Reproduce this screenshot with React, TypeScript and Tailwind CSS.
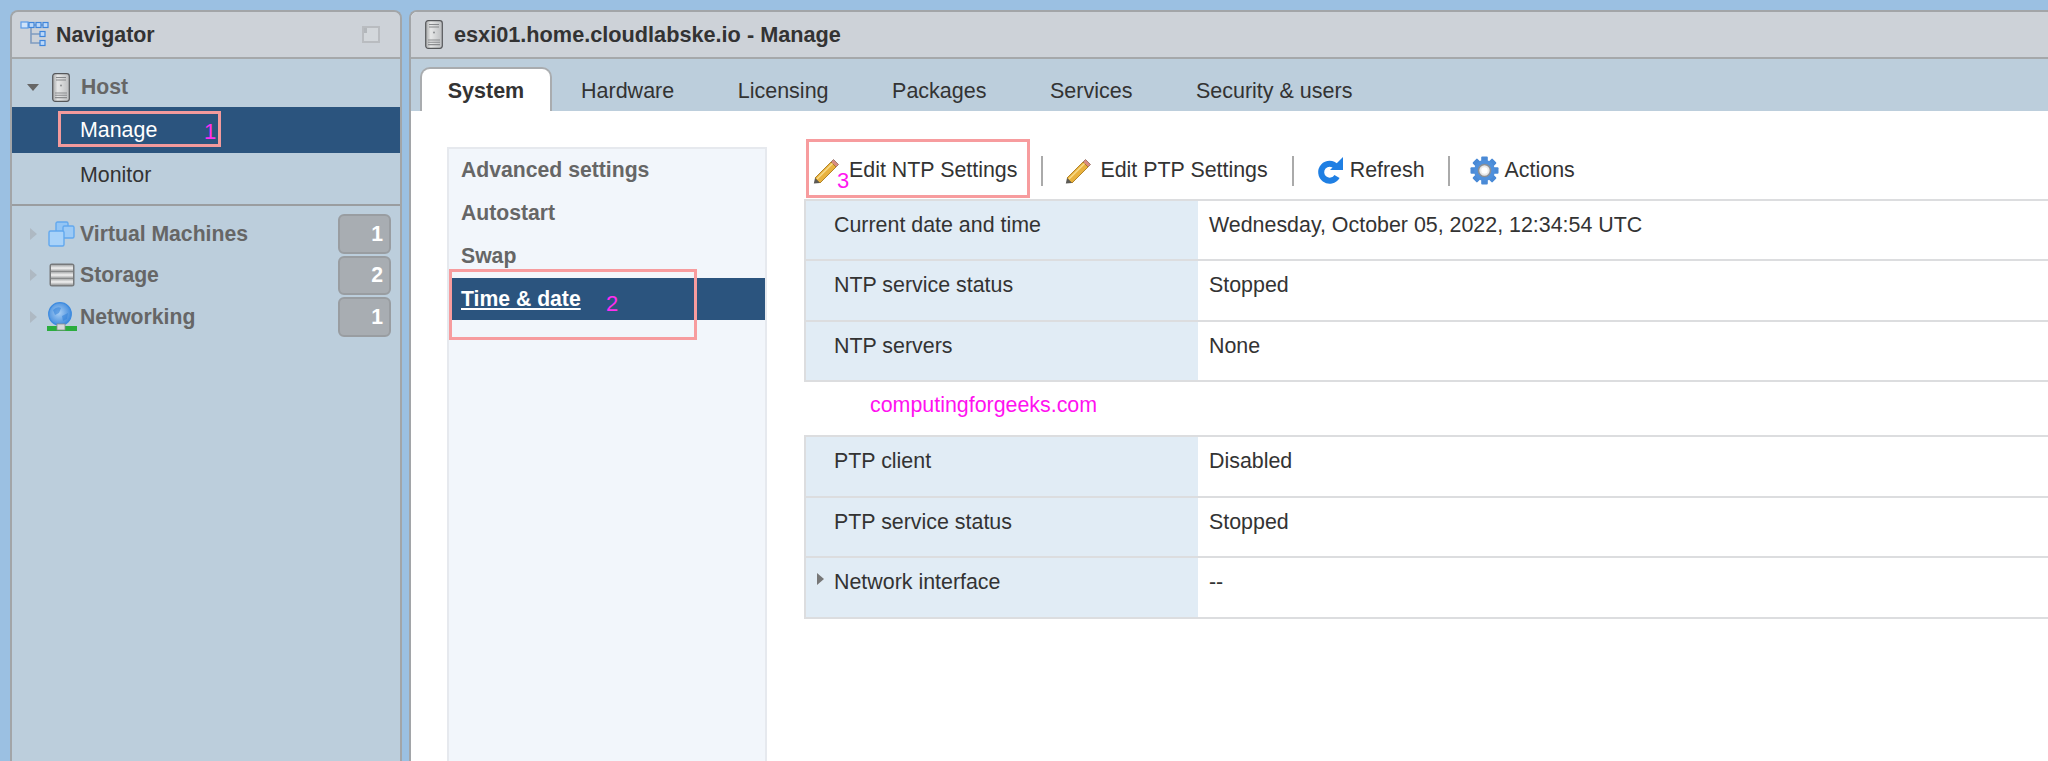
const font = "font-['Liberation_Sans',Arial,sans-serif]";

function NavTreeIcon() {
  return (
    <svg width="29" height="28" viewBox="0 0 29 28" className="shrink-0">
      <path d="M5 4 H27 M11 4 V22 H22 M11 13 H22" stroke="#7f9cc0" strokeWidth="1.6" fill="none" />
      <rect x="1" y="1" width="7" height="6" fill="#cfe3fa" stroke="#5b9be8" strokeWidth="1.2" />
      {[[9, 1.5], [16, 1.5], [23, 1.5], [20, 10.5], [20, 19.5]].map(([x, y]) => (
        <rect key={`${x}-${y}`} x={x} y={y} width="5" height="5" fill="#bcd8f8" stroke="#3f86dc" strokeWidth="1.2" />
      ))}
    </svg>
  );
}

function HostIcon() {
  return (
    <svg width="18" height="29" viewBox="0 0 18 29" className="shrink-0">
      <defs>
        <linearGradient id="hostBody" x1="0" x2="1" y1="0" y2="0">
          <stop offset="0" stopColor="#a5a7a8" />
          <stop offset="0.3" stopColor="#e6e7e7" />
          <stop offset="1" stopColor="#bcbec0" />
        </linearGradient>
      </defs>
      <rect x="0.7" y="0.7" width="16.6" height="27.6" rx="2.5" fill="url(#hostBody)" stroke="#55575a" strokeWidth="1.2" />
      <path d="M4 4.5 H14 M4 7 H14" stroke="#85878a" strokeWidth="1.1" />
      <circle cx="9" cy="12.5" r="0.9" fill="#85878a" />
      <path d="M3 20 H15 M3 22.3 H15 M3 24.6 H15" stroke="#8a8c8e" strokeWidth="1.1" />
    </svg>
  );
}

function VmIcon() {
  return (
    <svg width="27" height="26" viewBox="0 0 27 26" className="shrink-0">
      <rect x="8" y="1" width="12" height="10" rx="1.5" fill="#93c5f5" stroke="#62a8ee" strokeWidth="1.4" />
      <rect x="15" y="5" width="11" height="12" rx="1.5" fill="#9ccaf6" stroke="#62a8ee" strokeWidth="1.4" />
      <rect x="1" y="10" width="15" height="15" rx="1.5" fill="#a8d2f9" stroke="#62a8ee" strokeWidth="1.4" />
    </svg>
  );
}

function StorageIcon() {
  return (
    <svg width="26" height="24" viewBox="0 0 26 24" className="shrink-0">
      <defs>
        <linearGradient id="disk" x1="0" x2="0" y1="0" y2="1">
          <stop offset="0" stopColor="#a9abac" />
          <stop offset="0.5" stopColor="#f2f2f2" />
          <stop offset="1" stopColor="#9a9c9d" />
        </linearGradient>
      </defs>
      <rect x="0.5" y="0.5" width="25" height="23" rx="2.5" fill="#77797b" />
      <rect x="2" y="2" width="22" height="6.3" fill="url(#disk)" />
      <rect x="2" y="8.9" width="22" height="6.3" fill="url(#disk)" />
      <rect x="2" y="15.8" width="22" height="6.3" fill="url(#disk)" />
    </svg>
  );
}

function NetworkIcon() {
  return (
    <svg width="30" height="29" viewBox="0 0 30 29" className="shrink-0">
      <defs>
        <radialGradient id="globe" cx="0.45" cy="0.45" r="0.65">
          <stop offset="0" stopColor="#a9cff5" />
          <stop offset="1" stopColor="#2f7fd8" />
        </radialGradient>
      </defs>
      <circle cx="13" cy="12" r="11.3" fill="url(#globe)" stroke="#3d8be0" strokeWidth="1.2" />
      <path d="M6 8 Q10 4 14 6 L12 11 L8 13 Z M15 14 L21 11 L20 17 L16 19 Z" fill="#2f7fd8" opacity="0.55" />
      <rect x="0" y="24" width="30" height="5" fill="#2bad3e" />
      <rect x="10" y="22" width="8" height="6" fill="#d6d8d9" stroke="#8a8c8d" strokeWidth="0.8" />
    </svg>
  );
}

function PencilIcon() {
  return (
    <svg width="27" height="26" viewBox="0 0 27 26" className="shrink-0">
      <path d="M20.5 1.5 L25.5 6.5 L23 9 L18 4 Z" fill="#d98b80" stroke="#8f6b5c" strokeWidth="0.8" />
      <path d="M18 4 L23 9 L7 25 L2 20 Z" fill="#e9b23e" stroke="#a97a1f" strokeWidth="0.9" />
      <path d="M19.5 5.5 L4 21" stroke="#f8dc8b" strokeWidth="1.5" />
      <path d="M2 20 L7 25 L0.8 25.6 Z" fill="#5c5a55" />
    </svg>
  );
}

function RefreshIcon() {
  return (
    <svg width="27" height="29" viewBox="0 0 27 29" className="shrink-0">
      <path d="M19 10.5 A8.5 8.5 0 1 0 20 20.5" fill="none" stroke="#1f7fe3" strokeWidth="6" />
      <path d="M26 1 V14 H13 Z" fill="#1f7fe3" />
    </svg>
  );
}

function GearIcon() {
  const teeth = [0, 45, 90, 135, 180, 225, 270, 315];
  return (
    <svg width="29" height="29" viewBox="0 0 29 29" className="shrink-0">
      {teeth.map((a) => (
        <rect key={a} x="11.2" y="0.5" width="6.6" height="7" rx="1" fill="#4a8ad6" transform={`rotate(${a} 14.5 14.5)`} />
      ))}
      <circle cx="14.5" cy="14.5" r="10.5" fill="#4f90dc" />
      <circle cx="14.5" cy="14.5" r="6" fill="#e9e9e9" stroke="#8b8f94" strokeWidth="1.6" />
      <circle cx="14.5" cy="14.5" r="3.2" fill="#ffffff" />
    </svg>
  );
}

function CollapsedArrow({ color = 'border-l-[#aeb9c3]' }: { color?: string }) {
  return <span className={`block h-0 w-0 border-y-[6px] border-l-[7px] border-y-transparent ${color}`} />;
}

const inventory = [
  { label: 'Virtual Machines', count: '1', icon: <VmIcon /> },
  { label: 'Storage', count: '2', icon: <StorageIcon /> },
  { label: 'Networking', count: '1', icon: <NetworkIcon /> },
];

const tabs = ['Hardware', 'Licensing', 'Packages', 'Services', 'Security & users'];

const timeRows = [
  { label: 'Current date and time', value: 'Wednesday, October 05, 2022, 12:34:54 UTC' },
  { label: 'NTP service status', value: 'Stopped' },
  { label: 'NTP servers', value: 'None' },
];

const ptpRows = [
  { label: 'PTP client', value: 'Disabled' },
  { label: 'PTP service status', value: 'Stopped' },
  { label: 'Network interface', value: '--', expandable: true },
];

function Navigator() {
  return (
    <aside className="flex w-[392px] shrink-0 flex-col overflow-hidden rounded-t-[8px] border-2 border-b-0 border-[#a2a5a8] bg-[#bccedc]">
      <div className="flex h-[47px] shrink-0 items-center border-b-2 border-[#a5a8aa] bg-[#cdd2d8] pl-[8px] pr-[20px]">
        <NavTreeIcon />
        <span className="ml-[7px] pt-[1px] text-[21.4px] font-bold text-[#333]">Navigator</span>
        <span className="relative ml-auto h-[17px] w-[18px] border-2 border-[#b9bcc0] bg-[#d3d7db]">
          <span className="absolute left-0 top-0 h-[5px] w-[3px] bg-[#b3b7bb]" />
        </span>
      </div>

      <div className="flex h-[48px] shrink-0 items-center pl-[15px] pt-[8px]">
        <span className="h-0 w-0 border-x-[6px] border-t-[7px] border-x-transparent border-t-[#666]" />
        <span className="ml-[13px]">
          <HostIcon />
        </span>
        <span className="ml-[11px] text-[21.2px] font-bold text-[#666]">Host</span>
      </div>
      <div className="relative flex h-[46px] shrink-0 items-center bg-[#2b547e] pl-[68px] text-[21.4px] text-white">
        Manage
        <div className="absolute left-[46px] top-[4px] h-[36px] w-[163px] border-[3px] border-[#f39a9c]" />
        <span className="absolute left-[192px] top-[13px] text-[22px] leading-[24px] text-[#ff2ef0]">1</span>
      </div>
      <div className="flex h-[44px] shrink-0 items-center pl-[68px] text-[21.4px] text-[#333]">Monitor</div>
      <div className="mt-[7px] border-t-2 border-[#9a9da0]" />

      <div className="flex flex-col gap-[2px] pt-[8px]">
        {inventory.map((item) => (
          <div key={item.label} className="flex h-[39.5px] items-center pl-[18px] pr-[9px]">
            <CollapsedArrow />
            <span className="ml-[6px] flex w-[37px] justify-center">{item.icon}</span>
            <span className="text-[21.2px] font-bold text-[#666]">{item.label}</span>
            <span className="ml-auto flex h-[39.5px] w-[53px] items-center justify-end rounded-[6px] border-2 border-[#999da1] bg-[#a8adb2] pr-[6px] text-[21.2px] font-bold text-white">
              {item.count}
            </span>
          </div>
        ))}
      </div>
    </aside>
  );
}

function Toolbar() {
  return (
    <div className="relative flex h-[50px] items-center pb-[6px] pl-[9px] text-[21.4px] text-[#333]">
      <PencilIcon />
      <span className="ml-[9px]">Edit NTP Settings</span>
      <span className="ml-[24px] h-[30px] w-[2px] bg-[#aaa]" />
      <span className="ml-[22px]">
        <PencilIcon />
      </span>
      <span className="ml-[8px]">Edit PTP Settings</span>
      <span className="ml-[24px] h-[30px] w-[2px] bg-[#aaa]" />
      <span className="ml-[23px]">
        <RefreshIcon />
      </span>
      <span className="ml-[6px]">Refresh</span>
      <span className="ml-[23px] h-[30px] w-[2px] bg-[#aaa]" />
      <span className="ml-[20px]">
        <GearIcon />
      </span>
      <span className="ml-[6px]">Actions</span>

      <div className="absolute left-[2px] top-[-10px] h-[59px] w-[224px] border-[3px] border-[#f79c9e]" />
      <span className="absolute left-[33px] top-[20px] text-[22px] leading-[24px] text-[#ff17f0]">3</span>
    </div>
  );
}

function InfoTable({ rows }: { rows: { label: string; value: string; expandable?: boolean }[] }) {
  return (
    <div className="border-l-2 border-t-2 border-[#dcdddf] text-[21.4px] text-[#333]">
      {rows.map((row) => (
        <div key={row.label} className="flex h-[60.5px] border-b-2 border-[#dcdddf]">
          <div className="relative w-[392px] shrink-0 bg-[#e1ecf5] pl-[28px] pt-[8px]">
            {row.expandable && (
              <span className="absolute left-[11px] top-[15px]">
                <CollapsedArrow color="border-l-[#777]" />
              </span>
            )}
            {row.label}
          </div>
          <div className="flex-1 pl-[11px] pt-[8px]">{row.value}</div>
        </div>
      ))}
    </div>
  );
}

function ManagePanel() {
  return (
    <main className="flex min-w-0 flex-1 flex-col overflow-hidden rounded-tl-[8px] border-2 border-b-0 border-r-0 border-[#a2a5a8] bg-white">
      <div className="flex h-[47px] shrink-0 items-center border-b-2 border-[#a5a8aa] bg-[#cdd2d8] pl-[14px]">
        <HostIcon />
        <span className="ml-[11px] pt-[1px] text-[21.7px] font-bold text-[#333]">esxi01.home.cloudlabske.io - Manage</span>
      </div>

      <div className="flex h-[51.5px] shrink-0 items-end bg-[#bccedc] pl-[9px] text-[21.5px] text-[#333]">
        <div className="flex h-[44px] w-[132px] items-center justify-center rounded-t-[10px] border-x-2 border-t-2 border-[#a9acaf] bg-white pt-[3px] font-bold">
          System
        </div>
        {tabs.map((tab) => (
          <div key={tab} className="flex h-[44px] items-center pl-[29px] pr-[34.5px] pt-[5px]">
            {tab}
          </div>
        ))}
      </div>

      <div className="flex min-h-0 flex-1 pl-[36px] pt-[36px]">
        <nav className="w-[320px] shrink-0 border-x-2 border-t-2 border-[#e6e9ee] bg-[#f2f6fb] text-[21.2px] font-bold text-[#666]">
          <div className="flex h-[43px] items-center pl-[12px]">Advanced settings</div>
          <div className="flex h-[43px] items-center pl-[12px]">Autostart</div>
          <div className="flex h-[43px] items-center pl-[12px]">Swap</div>
          <div className="relative flex h-[42px] items-center bg-[#2b547e] pl-[12px] text-white">
            <span className="underline underline-offset-2">Time &amp; date</span>
            <span className="absolute left-[157px] top-[14px] text-[22px] font-normal leading-[24px] text-[#ff2ef0]">2</span>
            <div className="absolute left-[0px] top-[-9px] h-[71px] w-[248px] border-[3px] border-[#f79c9e]" />
          </div>
        </nav>

        <div className="ml-[37px] min-w-0 flex-1">
          <div className="pt-[2px]">
            <Toolbar />
          </div>
          <InfoTable rows={timeRows} />
          <div className="flex h-[53px] items-center pb-[6px] pl-[66px] text-[21.4px] text-[#ff11f0]">computingforgeeks.com</div>
          <InfoTable rows={ptpRows} />
        </div>
      </div>
    </main>
  );
}

export default function App() {
  return (
    <div className={`${font} flex h-screen w-full gap-[7px] overflow-hidden bg-[#9bc0e2] pl-[10px] pt-[10px]`}>
      <Navigator />
      <ManagePanel />
    </div>
  );
}
